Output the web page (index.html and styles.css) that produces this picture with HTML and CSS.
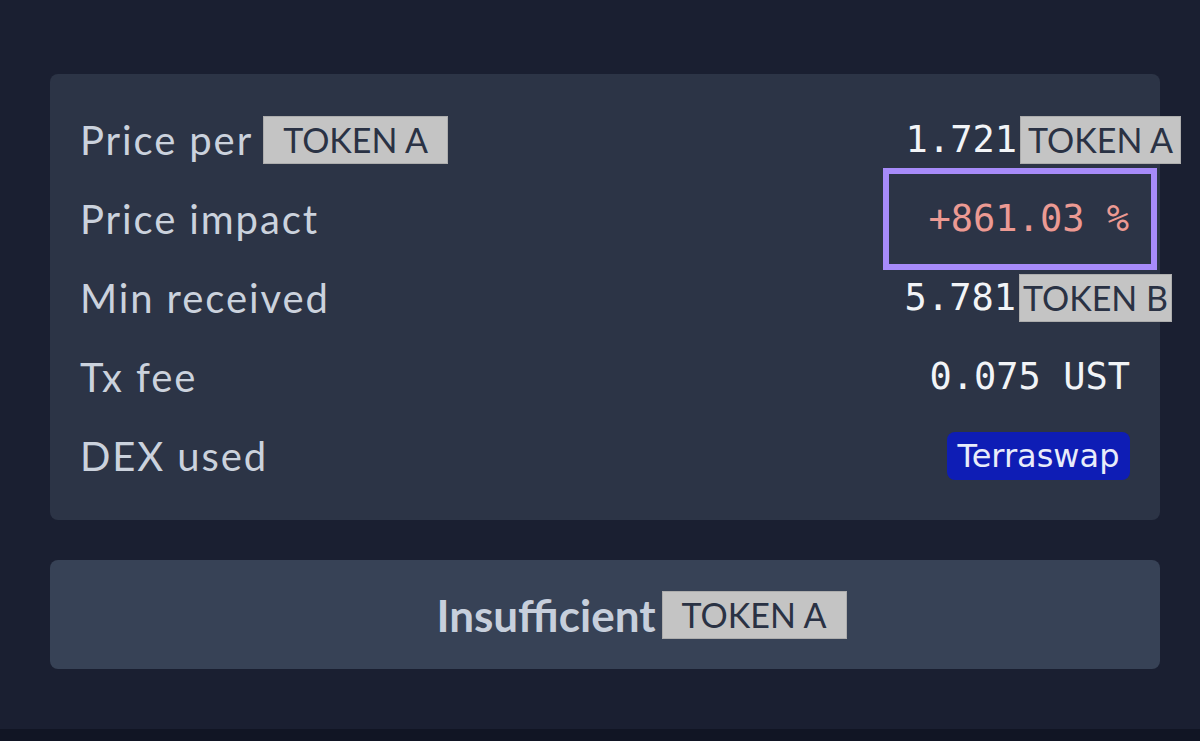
FILE: index.html
```html
<!DOCTYPE html>
<html lang="en">
<head>
<meta charset="utf-8">
<title>Swap summary</title>
<link rel="stylesheet" href="styles.css">
</head>
<body>
<div class="page">
  <main class="content">
    <section class="summary">
      <div class="row">
        <div class="label">Price per <span class="token token-wide">TOKEN A</span></div>
        <div class="value mono">1.721<span class="token token-tight token-a">TOKEN A</span></div>
      </div>
      <div class="row">
        <div class="label">Price impact</div>
        <div class="impact mono">+861.03 %</div>
      </div>
      <div class="row">
        <div class="label">Min received</div>
        <div class="value mono">5.781<span class="token token-tight token-b">TOKEN B</span></div>
      </div>
      <div class="row">
        <div class="label">Tx fee</div>
        <div class="value mono">0.075 UST</div>
      </div>
      <div class="row">
        <div class="label">DEX used</div>
        <div class="dex">Terraswap</div>
      </div>
    </section>
    <button class="submit" type="button">Insufficient <span class="token token-wide token-btn">TOKEN A</span></button>
  </main>
  <footer class="footer"></footer>
</div>
</body>
</html>
```
FILE: styles.css
```css
* { box-sizing: border-box; }
html, body { margin: 0; padding: 0; }
body {
  background: #1a1f31;
  font-family: Lato, "Open Sans", sans-serif;
  color: #cbd2dd;
}
.page {
  height: 741px;
  display: flex;
  flex-direction: column;
}
.content {
  flex: 1;
  padding: 74px 40px 0 50px;
  display: flex;
  flex-direction: column;
  gap: 40px;
}
.summary {
  background: #2c3446;
  border-radius: 8px;
  padding: 26px 30px 25px 30px;
  display: flex;
  flex-direction: column;
}
.row {
  height: 79px;
  display: flex;
  align-items: center;
  justify-content: space-between;
}
.label {
  font-size: 40px;
  letter-spacing: 1.9px;
  color: #cbd2dd;
  display: flex;
  align-items: center;
  white-space: nowrap;
}
.token {
  display: inline-flex;
  align-items: center;
  justify-content: center;
  height: 48px;
  background: #c4c4c4;
  border: 1px solid #adadad;
  color: #2a3244;
  font-family: Lato, "Open Sans", sans-serif;
  font-size: 34px;
  font-weight: 400;
  letter-spacing: 0;
  white-space: nowrap;
}
.token-wide {
  width: 185px;
  margin-left: 10px;
}
.token-tight {
  padding: 0;
  margin-left: 3px;
}
.token-a { width: 161px; margin-right: -51px; }
.token-b { width: 153px; margin-right: -42px; }
.mono {
  font-family: "DejaVu Sans Mono", "Liberation Mono", monospace;
  font-size: 37px;
}
.value {
  color: #f2f4f7;
  display: flex;
  align-items: center;
  white-space: nowrap;
}
.impact {
  color: #ec9a93;
  border: 6px solid #a78bfa;
  height: 102px;
  width: 274px;
  margin-right: -27px;
  padding: 0 22px 0 0;
  display: flex;
  align-items: center;
  justify-content: flex-end;
  white-space: nowrap;
}
.dex {
  background: #0e1db5;
  color: #e8ecfa;
  font-family: "DejaVu Sans", sans-serif;
  font-size: 32px;
  height: 48px;
  width: 183px;
  border-radius: 8px;
  display: flex;
  align-items: center;
  justify-content: center;
}
.submit {
  height: 109px;
  background: #374256;
  border: none;
  border-radius: 8px;
  color: #c7cfdc;
  font-family: Lato, "Open Sans", sans-serif;
  font-size: 44px;
  font-weight: 700;
  display: flex;
  align-items: center;
  justify-content: center;
  padding: 0;
}
.token-btn { margin-left: 6px; margin-right: -73px; }
.footer {
  height: 12px;
  background: #111524;
}
```
